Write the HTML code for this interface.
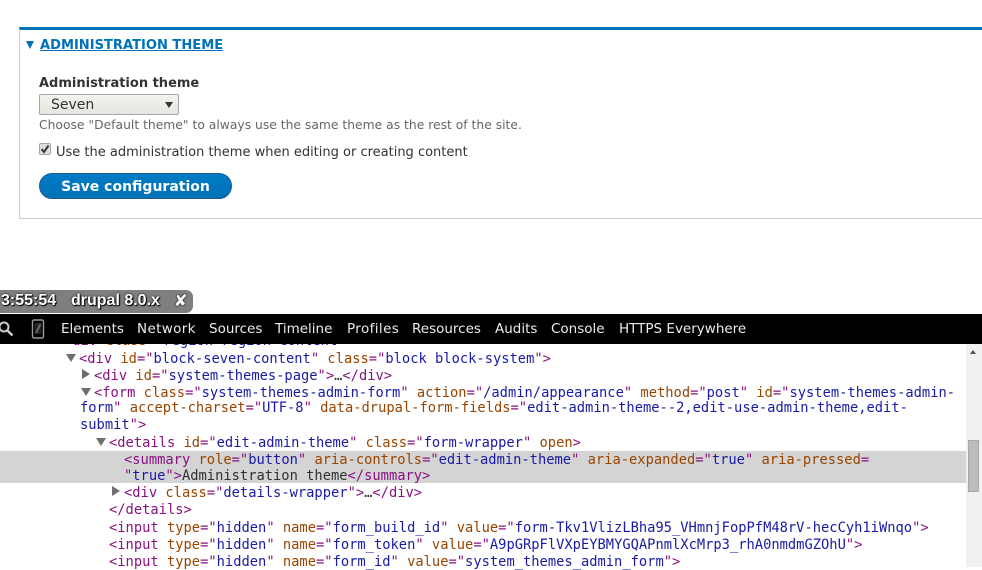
<!DOCTYPE html>
<html><head><meta charset="utf-8">
<style>
html,body{margin:0;padding:0;background:#fff}
body{width:982px;height:567px;overflow:hidden;position:relative;font-family:"DejaVu Sans",sans-serif}
.a{position:absolute;white-space:nowrap}
.t{position:absolute;top:321px;line-height:16px;font-family:"DejaVu Sans",sans-serif;font-size:13.5px;color:#ececec;white-space:nowrap}
.l{position:absolute;white-space:pre;font-family:"DejaVu Sans Mono",monospace;font-size:13.75px;line-height:16px;color:#881280}
.l i{font-style:normal;color:#994500}
.l b{font-weight:normal;color:#1a1aa6}
.l u{text-decoration:none;color:#303030}
.tri{position:absolute;width:0;height:0}
.d{border-left:5px solid transparent;border-right:5px solid transparent;border-top:8px solid #6e6e6e}
.r{border-top:5px solid transparent;border-bottom:5px solid transparent;border-left:8px solid #6e6e6e}
</style></head><body>
<div class="a" style="left:19px;top:27px;width:963px;height:192px;box-sizing:border-box;border:1px solid #ccc;border-right:0;border-top:3px solid #0074bd"></div>
<div class="tri" style="left:26px;top:41px;border-left:4.5px solid transparent;border-right:4.5px solid transparent;border-top:8px solid #0071b8"></div>
<div class="a" style="left:40px;top:38px;font-size:13.07px;line-height:16px;font-weight:bold;color:#0071b8;text-decoration:underline">ADMINISTRATION THEME</div>
<div class="a" style="left:39px;top:76px;font-size:13px;line-height:16px;font-weight:bold;color:#333">Administration theme</div>
<div class="a" style="left:39px;top:94px;width:140px;height:21px;box-sizing:border-box;border:1px solid #a6a6a6;border-radius:2px;background:linear-gradient(#f3f2ee,#e6e5e0)"></div>
<div class="a" style="left:51px;top:97px;font-size:14px;line-height:16px;color:#333">Seven</div>
<div class="tri" style="left:165px;top:102px;border-left:4.5px solid transparent;border-right:4.5px solid transparent;border-top:6px solid #333"></div>
<div class="a" style="left:39px;top:117px;font-size:12.33px;line-height:16px;color:#666">Choose "Default theme" to always use the same theme as the rest of the site.</div>
<div class="a" style="left:39px;top:143px;width:12px;height:12px;box-sizing:border-box;border:1px solid #a5a5a5;border-radius:2px;background:#dedede"></div>
<svg class="a" style="left:39px;top:143px" width="12" height="12" viewBox="0 0 12 12"><path d="M2.6 6.2L5 9 9.5 2.6" fill="none" stroke="#333" stroke-width="2"/></svg>
<div class="a" style="left:56px;top:145px;font-size:13px;line-height:16px;color:#333">Use the administration theme when editing or creating content</div>
<div class="a" style="left:39px;top:173px;width:193px;height:26px;box-sizing:border-box;border:1px solid #1e5c90;border-radius:13px;background:linear-gradient(#007bc6,#0071b8);color:#fff;font-size:14px;font-weight:bold;line-height:26px;text-align:center">Save configuration</div>

<div class="a" style="left:0;top:290px;width:193px;height:23px;background:#7f7f7f;border-radius:0 7px 7px 0"></div>
<div class="a" style="left:1px;top:292px;font:bold 16px/18px 'Liberation Sans',sans-serif;color:#fff;text-shadow:0 0 2px #000,1px 1px 1px #000">3:55:54</div>
<div class="a" style="left:71px;top:292px;font:bold 16px/18px 'Liberation Sans',sans-serif;color:#fff;text-shadow:0 0 2px #000,1px 1px 1px #000">drupal 8.0.x</div>
<div class="a" style="left:174px;top:292px;font:bold 16px/18px 'DejaVu Sans',sans-serif;color:#fff;text-shadow:0 0 2px #000">✘</div>

<div class="l" style="left:64px;top:333px">&lt;div <i>class</i>="<b>region region-content</b>"&gt;</div>
<div class="a" style="left:0;top:314px;width:982px;height:30px;background:#000"></div>
<svg class="a" style="left:0;top:320px" width="16" height="18" viewBox="0 0 16 18"><circle cx="4" cy="7" r="4.5" fill="none" stroke="#ccc" stroke-width="2"/><path d="M7.5 10.5L12.5 15.5" stroke="#ccc" stroke-width="2.4"/></svg>
<svg class="a" style="left:31px;top:319px" width="14" height="20" viewBox="0 0 14 20"><rect x="1.5" y="1" width="11" height="18" rx="1.5" fill="none" stroke="#999" stroke-width="1.4"/><path d="M3.5 4H10.5V15H3.5Z" fill="#222"/><path d="M9.5 5L5 14" stroke="#666" stroke-width="2"/></svg>
<div class="t" style="left:61px">Elements</div>
<div class="t" style="left:137px;letter-spacing:.35px">Network</div>
<div class="t" style="left:209px">Sources</div>
<div class="t" style="left:275px">Timeline</div>
<div class="t" style="left:347px;letter-spacing:.4px">Profiles</div>
<div class="t" style="left:412px">Resources</div>
<div class="t" style="left:495px">Audits</div>
<div class="t" style="left:551px">Console</div>
<div class="t" style="left:619px">HTTPS Everywhere</div>

<div class="a" style="left:0;top:451px;width:966px;height:32px;background:#d4d4d4"></div>

<div class="l" style="left:79px;top:351px">&lt;div <i>id</i>="<b>block-seven-content</b>" <i>class</i>="<b>block block-system</b>"&gt;</div>
<div class="l" style="left:94px;top:368px">&lt;div <i>id</i>="<b>system-themes-page</b>"&gt;<u>…</u>&lt;/div&gt;</div>
<div class="l" style="left:94px;top:385px">&lt;form <i>class</i>="<b>system-themes-admin-form</b>" <i>action</i>="<b>/admin/appearance</b>" <i>method</i>="<b>post</b>" <i>id</i>="<b>system-themes-admin-</b></div>
<div class="l" style="left:80px;top:400px"><b>form</b>" <i>accept-charset</i>="<b>UTF-8</b>" <i>data-drupal-form-fields</i>="<b>edit-admin-theme--2,edit-use-admin-theme,edit-</b></div>
<div class="l" style="left:80px;top:417px"><b>submit</b>"&gt;</div>
<div class="l" style="left:109px;top:435px">&lt;details <i>id</i>="<b>edit-admin-theme</b>" <i>class</i>="<b>form-wrapper</b>" <i>open</i>&gt;</div>
<div class="l" style="left:124px;top:452px">&lt;summary <i>role</i>="<b>button</b>" <i>aria-controls</i>="<b>edit-admin-theme</b>" <i>aria-expanded</i>="<b>true</b>" <i>aria-pressed</i>=</div>
<div class="l" style="left:124px;top:468px">"<b>true</b>"&gt;<u>Administration theme</u>&lt;/summary&gt;</div>
<div class="l" style="left:124px;top:485px">&lt;div <i>class</i>="<b>details-wrapper</b>"&gt;<u>…</u>&lt;/div&gt;</div>
<div class="l" style="left:109px;top:502px">&lt;/details&gt;</div>
<div class="l" style="left:109px;top:520px">&lt;input <i>type</i>="<b>hidden</b>" <i>name</i>="<b>form_build_id</b>" <i>value</i>="<b>form-Tkv1VlizLBha95_VHmnjFopPfM48rV-hecCyh1iWnqo</b>"&gt;</div>
<div class="l" style="left:109px;top:537px">&lt;input <i>type</i>="<b>hidden</b>" <i>name</i>="<b>form_token</b>" <i>value</i>="<b>A9pGRpFlVXpEYBMYGQAPnmlXcMrp3_rhA0nmdmGZOhU</b>"&gt;</div>
<div class="l" style="left:109px;top:554px">&lt;input <i>type</i>="<b>hidden</b>" <i>name</i>="<b>form_id</b>" <i>value</i>="<b>system_themes_admin_form</b>"&gt;</div>

<div class="tri d" style="left:66px;top:354px"></div>
<div class="tri r" style="left:82px;top:369px"></div>
<div class="tri d" style="left:81px;top:388px"></div>
<div class="tri d" style="left:96px;top:438px"></div>
<div class="tri r" style="left:112px;top:486px"></div>

<div class="a" style="left:966px;top:344px;width:16px;height:223px;background:#f1f1f1"></div>
<div class="tri" style="left:970px;top:350px;border-left:3.5px solid transparent;border-right:3.5px solid transparent;border-bottom:4px solid #505050"></div>
<div class="a" style="left:968px;top:440px;width:11px;height:52px;box-sizing:border-box;border:1px solid #a8a8a8;background:#bcbcbc"></div>
</body></html>
